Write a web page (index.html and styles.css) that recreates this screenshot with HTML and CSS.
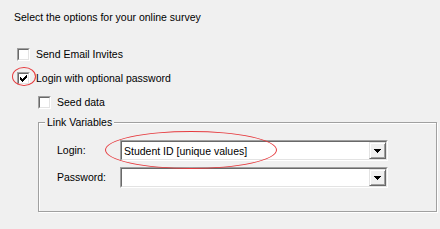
FILE: index.html
```html
<!DOCTYPE html>
<html>
<head>
<meta charset="utf-8">
<link rel="stylesheet" href="styles.css">
</head>
<body>
<div class="page">
  <div class="title">Select the options for your online survey</div>
  <div class="options">
    <div class="row">
      <span class="cb"><span class="cb-in"></span></span>
      <span class="lbl">Send Email Invites</span>
    </div>
    <div class="row">
      <span class="cb"><span class="cb-in">
        <svg class="tick" width="7" height="7" viewBox="0 0 7 7" shape-rendering="crispEdges"><path d="M6 0h1v3h-1zM5 1h1v3h-1zM4 2h1v3h-1zM3 3h1v3h-1zM2 4h1v3h-1zM1 3h1v3h-1zM0 2h1v3h-1z" fill="#000"/></svg>
      </span></span>
      <span class="lbl">Login with optional password</span>
    </div>
    <div class="row sub">
      <span class="cb"><span class="cb-in"></span></span>
      <span class="lbl">Seed data</span>
    </div>
  </div>
  <div class="group">
    <span class="legend">Link Variables</span>
    <div class="fields">
      <span class="flabel">Login:</span>
      <div class="combo"><div class="combo-in">
        <span class="value">Student ID [unique values]</span>
        <span class="btn"><svg class="arrow" width="7" height="4" viewBox="0 0 7 4" shape-rendering="crispEdges"><path d="M0 0h7v1H0zM1 1h5v1H1zM2 2h3v1H2zM3 3h1v1H3z" fill="#000"/></svg></span>
      </div></div>
      <span class="flabel">Password:</span>
      <div class="combo"><div class="combo-in">
        <span class="value"></span>
        <span class="btn"><svg class="arrow" width="7" height="4" viewBox="0 0 7 4" shape-rendering="crispEdges"><path d="M0 0h7v1H0zM1 1h5v1H1zM2 2h3v1H2zM3 3h1v1H3z" fill="#000"/></svg></span>
      </div></div>
    </div>
  </div>
  <span class="mark mark-check"></span>
  <span class="mark mark-combo"></span>
</div>
</body>
</html>
```
FILE: styles.css
```css
html, body {
  margin: 0;
  padding: 0;
  background: #f0f0f0;
}
body {
  font-family: "Liberation Sans", Arial, sans-serif;
  font-size: 10.5px;
  color: #000;
}
.page {
  position: relative;
  width: 440px;
  height: 229px;
  overflow: hidden;
}
.title {
  padding: 11px 0 0 14px;
  line-height: 13px;
}
.options {
  display: flex;
  flex-direction: column;
  gap: 11px;
  margin-top: 24px;
  padding-left: 17px;
}
.row {
  display: flex;
  align-items: center;
  gap: 6px;
  height: 13px;
  line-height: 13px;
}
.row.sub {
  padding-left: 21px;
}
.cb {
  flex: none;
  display: block;
  width: 13px;
  height: 13px;
  box-sizing: border-box;
  border: 1px solid;
  border-color: #a0a0a0 #ffffff #ffffff #a0a0a0;
}
.cb-in {
  display: block;
  height: 100%;
  box-sizing: border-box;
  border: 1px solid;
  border-color: #696969 #e3e3e3 #e3e3e3 #696969;
  background: #fff;
}
.tick {
  display: block;
  margin: 1px 0 0 1px;
}
.group {
  position: relative;
  margin: 13px 0 0 38px;
  width: 399px;
  height: 90px;
  box-sizing: border-box;
  border: 1px solid #a0a0a0;
  box-shadow: inset 1px 1px 0 #fff, 1px 1px 0 #fff;
}
.legend {
  position: absolute;
  top: -7px;
  left: 6px;
  padding: 0 2px;
  background: #f0f0f0;
  line-height: 13px;
}
.fields {
  display: grid;
  grid-template-columns: 63px 268px;
  row-gap: 6px;
  align-items: center;
  padding: 17px 0 0 18px;
}
.flabel {
  line-height: 13px;
}
.combo {
  height: 21px;
  box-sizing: border-box;
  border: 1px solid;
  border-color: #a0a0a0 #ffffff #ffffff #a0a0a0;
}
.combo-in {
  display: flex;
  height: 100%;
  box-sizing: border-box;
  border: 1px solid;
  border-color: #696969 #e3e3e3 #e3e3e3 #696969;
  background: #fff;
}
.value {
  flex: 1;
  padding: 3px 0 0 2px;
  line-height: 13px;
  white-space: nowrap;
}
.btn {
  flex: none;
  width: 17px;
  height: 17px;
  box-sizing: border-box;
  border: 1px solid;
  border-color: #e3e3e3 #696969 #696969 #e3e3e3;
  box-shadow: inset 1px 1px 0 #fff, inset -1px -1px 0 #a0a0a0;
  background: #f0f0f0;
}
.arrow {
  display: block;
  margin: 6px auto 0;
}
.mark {
  position: absolute;
  box-sizing: border-box;
  border: 1.5px solid #e63a3e;
  border-radius: 50%;
}
.mark-check {
  left: 12px;
  top: 67px;
  width: 24px;
  height: 19px;
}
.mark-combo {
  left: 105px;
  top: 131px;
  width: 172px;
  height: 38px;
}
```
